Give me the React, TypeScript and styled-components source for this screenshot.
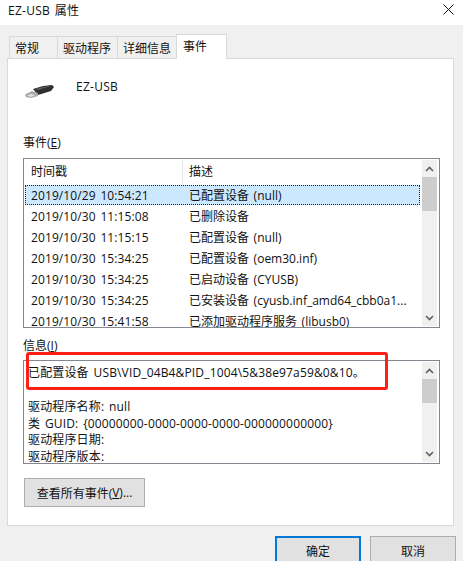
import React from 'react';
import styled, { createGlobalStyle } from 'styled-components';

const GlobalStyle = createGlobalStyle`
  html, body {
    margin: 0;
    padding: 0;
    background: #f0f0f0;
  }
  body {
    font-family: "Open Sans", "Noto Sans CJK SC", sans-serif;
    font-size: 12px;
    word-spacing: 1.5px;
    color: #111;
  }
`;

const Dialog = styled.div`
  width: 463px;
  height: 561px;
  overflow: hidden;
  display: flex;
  flex-direction: column;
  background: #f0f0f0;
  position: relative;
`;

const TitleBar = styled.div`
  height: 25px;
  flex: none;
  display: flex;
  align-items: center;
  justify-content: space-between;
  background: #fff;
  padding: 0 9px 5px 8px;
  box-sizing: border-box;
`;

const TitleText = styled.span`
  letter-spacing: 0.25px;
`;

const CloseIcon = styled.svg`
  width: 11px;
  height: 11px;
  margin-bottom: 2px;
`;

const TabStrip = styled.div`
  display: flex;
  align-items: flex-end;
  height: 33px;
  flex: none;
  padding-left: 9px;
  position: relative;
  z-index: 1;
`;

const Tab = styled.div<{ $width: number; $active?: boolean }>`
  width: ${({ $width }) => $width}px;
  height: ${({ $active }) => ($active ? 25 : 22)}px;
  margin-bottom: ${({ $active }) => ($active ? -1 : 0)}px;
  box-sizing: border-box;
  border: 1px solid #d9d9d9;
  border-bottom: none;
  border-right-width: ${({ $active }) => ($active ? 1 : 0)}px;
  background: ${({ $active }) => ($active ? '#fff' : '#f0f0f0')};
  display: flex;
  align-items: center;
  padding-left: ${({ $active }) => ($active ? 6 : 5)}px;
  padding-bottom: ${({ $active }) => ($active ? 2 : 0)}px;
  white-space: nowrap;
`;

const Panel = styled.div`
  width: 447px;
  height: 468px;
  margin-left: 7px;
  box-sizing: border-box;
  flex: none;
  background: #fff;
  border: 1px solid #d9d9d9;
  padding: 0 12px 0 15px;
  display: flex;
  flex-direction: column;
`;

const DeviceRow = styled.div`
  height: 75px;
  flex: none;
  display: flex;
  align-items: flex-start;
  padding: 21px 0 0 2px;
  box-sizing: border-box;
  gap: 21px;
`;

const DeviceName = styled.span`
  line-height: 14px;
  letter-spacing: 0.25px;
`;

const UsbIcon = styled.svg`
  width: 30px;
  height: 14px;
  margin-top: 5px;
  flex: none;
`;

const GroupLabel = styled.div<{ $top: number; $bottom: number }>`
  margin: ${({ $top }) => $top}px 0 ${({ $bottom }) => $bottom}px;
  height: 16px;
  line-height: 17px;
  flex: none;
`;

const Frame = styled.div<{ $height: number }>`
  width: 417px;
  height: ${({ $height }) => $height}px;
  flex: none;
  box-sizing: border-box;
  border: 1px solid #828790;
  display: flex;
  overflow: hidden;
  background: #fff;
`;

const ListArea = styled.div`
  flex: 1;
  min-width: 0;
  overflow: hidden;
  display: flex;
  flex-direction: column;
`;

const HeaderRow = styled.div`
  display: grid;
  grid-template-columns: 158px 1fr;
  height: 26px;
  flex: none;
  align-items: center;
`;

const HeaderCell = styled.div<{ $divider?: boolean }>`
  height: 25px;
  margin-top: 1px;
  line-height: 23px;
  padding-left: ${({ $divider }) => ($divider ? 6 : 7)}px;
  border-left: ${({ $divider }) => ($divider ? '1px solid #e5e5e5' : 'none')};
  box-sizing: border-box;
`;

const Row = styled.div<{ $selected?: boolean }>`
  display: grid;
  grid-template-columns: 159px 1fr;
  height: 20px;
  margin: 0 2px 1px 1px;
  flex: none;
  box-sizing: border-box;
  align-items: center;
  background: ${({ $selected }) => ($selected ? '#cce8ff' : 'transparent')};
  outline: ${({ $selected }) => ($selected ? '1px dotted #222' : 'none')};
  outline-offset: -1px;
  white-space: nowrap;
`;

const TimeCell = styled.div`
  padding-left: 6px;
  letter-spacing: 0.1px;
  overflow: hidden;
`;

const TextCell = styled.div`
  padding-left: 5px;
  overflow: hidden;
`;

const ScrollBar = styled.div`
  width: 15px;
  flex: none;
  margin: 1px 2px 1px 0;
  background: #f0f0f0;
  display: flex;
  flex-direction: column;
`;

const ScrollButton = styled.div`
  height: 17px;
  flex: none;
  display: flex;
  align-items: center;
  justify-content: center;
`;

const ScrollTrack = styled.div`
  flex: 1;
  min-height: 0;
`;

const ScrollThumb = styled.div<{ $height: number }>`
  height: ${({ $height }) => $height}px;
  background: #cdcdcd;
`;

const InfoText = styled.div`
  flex: 1;
  min-width: 0;
  overflow: hidden;
  padding: 3px 0 0 4px;
  white-space: nowrap;
  letter-spacing: 0.15px;
`;

const InfoLine = styled.div<{ $gap?: boolean }>`
  height: 16.8px;
  line-height: 17px;
  margin-bottom: ${({ $gap }) => ($gap ? 17 : 0)}px;
`;

const Highlight = styled.div`
  position: absolute;
  left: 26px;
  top: 352px;
  width: 362px;
  height: 38px;
  box-sizing: border-box;
  border: 3px solid #ff2015;
  border-radius: 3px;
  pointer-events: none;
`;

const Button = styled.div<{ $width: number; $primary?: boolean }>`
  width: ${({ $width }) => $width}px;
  height: 29px;
  flex: none;
  box-sizing: border-box;
  border: ${({ $primary }) => ($primary ? '2px solid #0078d7' : '1px solid #adadad')};
  background: #e1e1e1;
  display: flex;
  align-items: center;
  justify-content: center;
  white-space: nowrap;
`;

const ViewAll = styled(Button)`
  margin: 14px 0 0 1px;
`;

const Key = styled.span`
  text-decoration: underline;
`;

const Footer = styled.div`
  display: flex;
  justify-content: flex-end;
  gap: 9px;
  padding: 10px 7px 0 0;
`;

const events = [
  ['2019/10/29 10:54:21', '已配置设备 (null)'],
  ['2019/10/30 11:15:08', '已删除设备'],
  ['2019/10/30 11:15:15', '已配置设备 (null)'],
  ['2019/10/30 15:34:25', '已配置设备 (oem30.inf)'],
  ['2019/10/30 15:34:25', '已启动设备 (CYUSB)'],
  ['2019/10/30 15:34:25', '已安装设备 (cyusb.inf_amd64_cbb0a1...'],
  ['2019/10/30 15:41:58', '已添加驱动程序服务 (libusb0)'],
];

const Arrow: React.FC<{ up?: boolean }> = ({ up }) => (
  <svg width="9" height="6" viewBox="0 0 9 6" fill="none">
    <path d={up ? 'M1 5L4.5 1.5L8 5' : 'M1 1L4.5 4.5L8 1'} stroke="#606060" strokeWidth="1.6" />
  </svg>
);

const Scroller: React.FC<{ thumb: number }> = ({ thumb }) => (
  <ScrollBar>
    <ScrollButton>
      <Arrow up />
    </ScrollButton>
    <ScrollTrack>
      <ScrollThumb $height={thumb} />
    </ScrollTrack>
    <ScrollButton>
      <Arrow />
    </ScrollButton>
  </ScrollBar>
);

export default function App() {
  return (
    <Dialog>
      <GlobalStyle />
      <TitleBar>
        <TitleText>EZ-USB 属性</TitleText>
        <CloseIcon viewBox="0 0 11 11">
          <path d="M0.5 0.5L10.5 10.5M10.5 0.5L0.5 10.5" stroke="#111" strokeWidth="1" fill="none" />
        </CloseIcon>
      </TitleBar>
      <TabStrip>
        <Tab $width={48}>常规</Tab>
        <Tab $width={60}>驱动程序</Tab>
        <Tab $width={59}>详细信息</Tab>
        <Tab $width={51} $active>事件</Tab>
      </TabStrip>
      <Panel>
        <DeviceRow>
          <UsbIcon viewBox="0 0 30 14">
            <path d="M8 4L18 1L27 0L29 2L26 6L13 10Z" fill="#2f2f2f" />
            <path d="M10 4L22 1.2L26 1L13 5Z" fill="#5e5e5e" />
            <path d="M0 9.5L7 6L13 8L13 11L6 13L1 12Z" fill="#a8a8a8" />
            <path d="M2 10.5L6 9L10 10L6 12Z" fill="#e4e4e4" />
          </UsbIcon>
          <DeviceName>EZ-USB</DeviceName>
        </DeviceRow>
        <GroupLabel $top={0} $bottom={8}>事件(<Key>E</Key>)</GroupLabel>
        <Frame $height={170}>
          <ListArea>
            <HeaderRow>
              <HeaderCell>时间戳</HeaderCell>
              <HeaderCell $divider>描述</HeaderCell>
            </HeaderRow>
            {events.map(([time, text], i) => (
              <Row key={i} $selected={i === 0}>
                <TimeCell>{time}</TimeCell>
                <TextCell>{text}</TextCell>
              </Row>
            ))}
          </ListArea>
          <Scroller thumb={34} />
        </Frame>
        <GroupLabel $top={9} $bottom={7}>信息(<Key>I</Key>)</GroupLabel>
        <Frame $height={104}>
          <InfoText>
            <InfoLine $gap>已配置设备 USB\VID_04B4&amp;PID_1004\5&amp;38e97a59&amp;0&amp;10。</InfoLine>
            <InfoLine>驱动程序名称: null</InfoLine>
            <InfoLine>类 GUID: {'{00000000-0000-0000-0000-000000000000}'}</InfoLine>
            <InfoLine>驱动程序日期:</InfoLine>
            <InfoLine>驱动程序版本:</InfoLine>
          </InfoText>
          <Scroller thumb={24} />
        </Frame>
        <ViewAll $width={121}>查看所有事件(<Key>V</Key>)...</ViewAll>
      </Panel>
      <Footer>
        <Button $width={86} $primary>确定</Button>
        <Button $width={86}>取消</Button>
      </Footer>
      <Highlight />
    </Dialog>
  );
}
